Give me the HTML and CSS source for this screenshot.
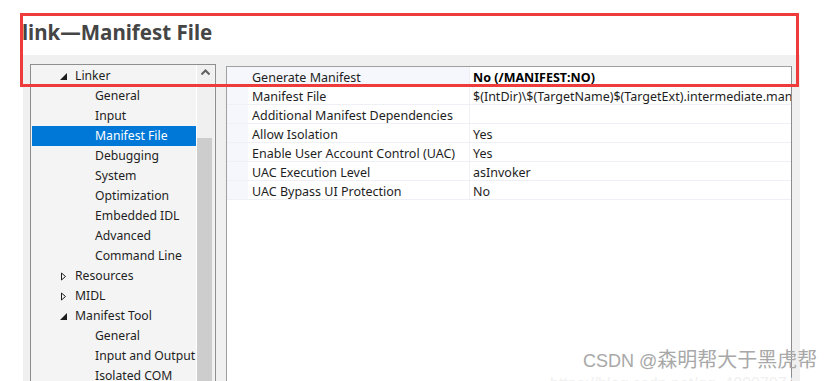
FILE: index.html
```html
<!DOCTYPE html>
<html>
<head>
<meta charset="utf-8">
<link rel="stylesheet" href="styles.css">
</head>
<body>
<div class="page">
  <h1 class="title">link—Manifest File</h1>
  <div class="panel">
    <div class="tree">
      <ul class="list">
        <li class="row lvl1"><svg class="tri" width="7" height="7" viewBox="0 0 7 7"><path d="M7 0V7H0Z" fill="#1e1e1e"/></svg>Linker</li>
        <li class="row lvl2">General</li>
        <li class="row lvl2">Input</li>
        <li class="row lvl2 sel">Manifest File</li>
        <li class="row lvl2">Debugging</li>
        <li class="row lvl2">System</li>
        <li class="row lvl2">Optimization</li>
        <li class="row lvl2">Embedded IDL</li>
        <li class="row lvl2">Advanced</li>
        <li class="row lvl2">Command Line</li>
        <li class="row lvl1"><svg class="tri" width="7" height="9" viewBox="0 0 7 9"><path d="M1.5 1V8L5.5 4.5Z" fill="none" stroke="#1e1e1e" stroke-width="1"/></svg>Resources</li>
        <li class="row lvl1"><svg class="tri" width="7" height="9" viewBox="0 0 7 9"><path d="M1.5 1V8L5.5 4.5Z" fill="none" stroke="#1e1e1e" stroke-width="1"/></svg>MIDL</li>
        <li class="row lvl1"><svg class="tri" width="7" height="7" viewBox="0 0 7 7"><path d="M7 0V7H0Z" fill="#1e1e1e"/></svg>Manifest Tool</li>
        <li class="row lvl2">General</li>
        <li class="row lvl2">Input and Output</li>
        <li class="row lvl2">Isolated COM</li>
      </ul>
      <div class="scrollbar">
        <div class="arrow"><svg class="chev" width="9" height="6" viewBox="0 0 9 6"><path d="M0.5 5.5L4.5 1.5L8.5 5.5" fill="none" stroke="#606060" stroke-width="2"/></svg></div>
        <div class="track"><div class="thumb"></div></div>
      </div>
    </div>
    <div class="grid">
      <div class="prop selrow"><span class="gut"></span><span class="name">Generate Manifest</span><span class="val bold">No (/MANIFEST:NO)</span></div>
      <div class="prop"><span class="gut"></span><span class="name">Manifest File</span><span class="val">$(IntDir)\$(TargetName)$(TargetExt).intermediate.manifest</span></div>
      <div class="prop"><span class="gut"></span><span class="name">Additional Manifest Dependencies</span><span class="val"></span></div>
      <div class="prop"><span class="gut"></span><span class="name">Allow Isolation</span><span class="val">Yes</span></div>
      <div class="prop"><span class="gut"></span><span class="name">Enable User Account Control (UAC)</span><span class="val">Yes</span></div>
      <div class="prop"><span class="gut"></span><span class="name">UAC Execution Level</span><span class="val">asInvoker</span></div>
      <div class="prop"><span class="gut"></span><span class="name">UAC Bypass UI Protection</span><span class="val">No</span></div>
    </div>
  </div>
  <div class="annot"></div>
  <div class="mark"><span class="latin">CSDN @</span>森明帮大于黑虎帮</div>
  <div class="url">https://blog.csdn.net/qq_40907074</div>
</div>
</body>
</html>
```
FILE: styles.css
```css
* { box-sizing: border-box; }
html, body { margin: 0; padding: 0; background: #fff; }
.page {
  position: relative;
  width: 830px;
  height: 381px;
  overflow: hidden;
  font-family: "Noto Sans", "Noto Sans CJK SC", sans-serif;
  color: #1e1e1e;
}
.title {
  margin: 0;
  height: 55px;
  padding: 19px 0 0 22px;
  font-size: 20.5px;
  line-height: 26px;
  font-weight: bold;
  color: #454545;
}
.panel {
  margin-left: 23px;
  width: 777px;
  height: 326px;
  background: #f0f0f0;
  display: flex;
  align-items: flex-start;
  gap: 10px;
  padding: 9px 0 0 7px;
  overflow: hidden;
}
.tree {
  width: 186px;
  height: 330px;
  border: 1px solid #8e8e8e;
  background: #f4f4f4;
  display: flex;
  flex: none;
}
.list {
  list-style: none;
  margin: 0;
  padding: 1px 0 0 1px;
  width: 166px;
  border-right: 1px solid #fff;
  font-size: 12.2px;
}
.row {
  height: 20px;
  line-height: 20px;
  white-space: nowrap;
  display: flex;
  align-items: center;
}
.lvl1 { padding-left: 28px; }
.lvl2 { padding-left: 63px; }
.tri { margin-right: 8px; flex: none; }
.sel { background: #0078d7; color: #fff; }
.scrollbar {
  width: 17px;
  display: flex;
  flex-direction: column;
  background: #f0f0f0;
}
.arrow {
  height: 19px;
  display: flex;
  align-items: center;
  justify-content: center;
  padding: 4px 1px 0 0;
}
.chev { display: block; }
.track { flex: 1; padding-top: 63px; }
.thumb { width: 15px; height: 260px; background: #cdcdcd; }
.grid {
  margin-top: 2px;
  width: 566px;
  height: 330px;
  border: 1px solid #a0a0a0;
  border-right-color: #8c8c8c;
  background: #fff;
  font-size: 12.5px;
  flex: none;
}
.prop {
  display: flex;
  height: 19px;
  line-height: 21px;
  border-bottom: 1px solid #eef0f5;
  white-space: nowrap;
}
.gut { width: 21px; flex: none; background: #f5f7fc; }
.name { width: 222px; flex: none; padding-left: 4px; border-right: 1px solid #eef0f5; }
.val { flex: 1; padding-left: 3px; overflow: hidden; }
.bold { font-weight: bold; color: #000; }
.selrow .name { background: #f5f7fc; }
.annot {
  position: absolute;
  left: 20px;
  top: 13px;
  width: 779px;
  height: 74px;
  border: 3px solid #ee3b3b;
}
.mark {
  position: absolute;
  left: 583px;
  top: 345px;
  font-size: 20px;
  line-height: 28px;
  color: #a8a8a8;
  white-space: nowrap;
  font-family: "Noto Sans CJK SC", sans-serif;
}
.mark .latin { font-family: "Liberation Sans", sans-serif; font-size: 18px; }
.url {
  position: absolute;
  left: 550px;
  top: 375px;
  font-family: "Liberation Sans", sans-serif;
  font-size: 16px;
  color: #f0f0f0;
  white-space: nowrap;
}
```
